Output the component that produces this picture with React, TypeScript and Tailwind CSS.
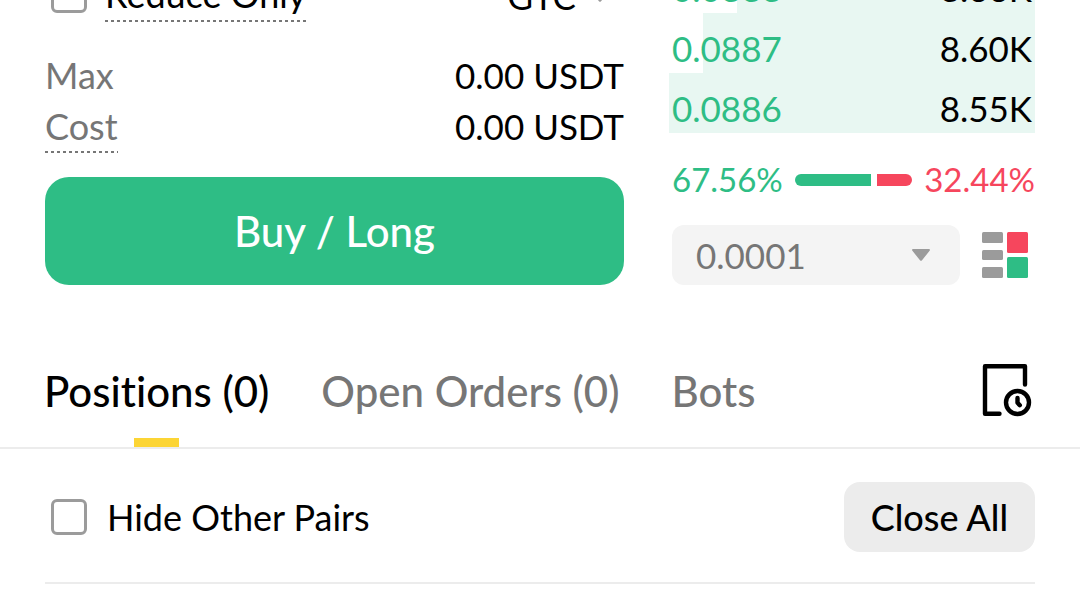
import { useId, useState } from "react";

const DASHED =
  "bg-[linear-gradient(90deg,#767676_50%,transparent_50%)] bg-[length:6px_2px] bg-bottom-left bg-repeat-x";

const bids = [
  { price: "0.0888", amount: "8.66K", depth: 81.4 },
  { price: "0.0887", amount: "8.60K", depth: 90.7 },
  { price: "0.0886", amount: "8.55K", depth: 100 },
];

const tabs = ["Positions (0)", "Open Orders (0)", "Bots"];

function Caret({ className }: { className: string }) {
  return (
    <svg viewBox="0 0 18 12" className={`h-3 w-[18px] ${className}`} aria-hidden="true">
      <path d="M1.2 0h15.6c1 0 1.5 1 .8 1.8L10 11.3c-.6.7-1.4.7-2 0L.4 1.8C-.3 1 .2 0 1.2 0Z" fill="#9b9b9b" />
    </svg>
  );
}

function Checkbox({ id }: { id: string }) {
  return (
    <input
      id={id}
      type="checkbox"
      className="size-9 shrink-0 appearance-none rounded-md border-3 border-[#9b9b9b] bg-white checked:bg-[#9b9b9b]"
    />
  );
}

function LayoutIcon() {
  return (
    <svg viewBox="0 0 46 46" className="size-[46px]" aria-hidden="true">
      <g fill="#9b9b9b">
        <rect x="0" y="0" width="21" height="11" rx="1.5" />
        <rect x="0" y="18" width="21" height="10" rx="1.5" />
        <rect x="0" y="35" width="21" height="11" rx="1.5" />
      </g>
      <rect x="25" y="0" width="21" height="21" rx="1.5" fill="#f6465d" />
      <rect x="25" y="25" width="21" height="21" rx="1.5" fill="#2ebd85" />
    </svg>
  );
}

function HistoryIcon() {
  return (
    <svg
      viewBox="0 0 50 54"
      className="h-[54px] w-[50px]"
      fill="none"
      stroke="#000"
      strokeWidth="4.4"
      strokeLinecap="round"
      strokeLinejoin="round"
      aria-hidden="true"
    >
      <path d="M17.5 50.8H3V3.2H43V21.5" />
      <circle cx="35.5" cy="39.5" r="11.5" />
      <path d="M35.5 35V39.8L37.8 42.2" />
    </svg>
  );
}

function OrderForm() {
  const reduceId = useId();
  return (
    <section className="flex flex-col">
      <div className="mt-[17px] flex h-[52px] justify-between">
        <div className="flex gap-[18px] pl-[6px]">
          <div className="pt-[3px]">
            <Checkbox id={reduceId} />
          </div>
          <label htmlFor={reduceId} className={`text-4xl leading-[48px] ${DASHED}`}>
            Reduce Only
          </label>
        </div>
        <div className="relative h-12">
          <select
            aria-label="Time in force"
            className="h-full appearance-none bg-transparent pr-12 text-right"
          >
            <option>GTC</option>
          </select>
          <Caret className="pointer-events-none absolute top-5 right-[15px]" />
        </div>
      </div>

      <dl className="mt-[29px] flex flex-col">
        <div className="flex h-[51px] justify-between leading-[49px]">
          <dt className="text-4xl leading-[49px] text-[#767676]">Max</dt>
          <dd>0.00 USDT</dd>
        </div>
        <div className="flex h-[51px] justify-between leading-[49px]">
          <dt className={`text-4xl leading-[49px] text-[#767676] ${DASHED}`}>Cost</dt>
          <dd>0.00 USDT</dd>
        </div>
      </dl>

      <button
        type="button"
        className="mt-6 h-[108px] rounded-3xl bg-[#2ebd85] text-[42px] font-medium text-white"
      >
        Buy / Long
      </button>
    </section>
  );
}

function OrderBook() {
  return (
    <section className="flex flex-col">
      <ul>
        {bids.map((bid) => (
          <li key={bid.price} className="relative flex h-[60px] justify-between px-[3px] leading-[70px]">
            <div
              className="absolute inset-y-0 right-0 bg-[#e8f7f2]"
              style={{ width: `${bid.depth}%` }}
            />
            <span className="relative text-[#2ebd85]">{bid.price}</span>
            <span className="relative">{bid.amount}</span>
          </li>
        ))}
      </ul>

      <div className="mt-6 flex h-[46px] items-center gap-3 pl-[3px] text-[33px]">
        <span className="text-[#2ebd85]">67.56%</span>
        <div className="flex h-3 flex-1 gap-[6px]">
          <div className="flex-[68] rounded-l-full bg-[#2ebd85]" />
          <div className="flex-[32] rounded-r-full bg-[#f6465d]" />
        </div>
        <span className="text-[#f6465d]">32.44%</span>
      </div>

      <div className="mt-[22px] flex items-center gap-[22px] pr-[7px] pl-[3px]">
        <div className="relative h-[60px] flex-1">
          <select
            aria-label="Price grouping"
            className="size-full appearance-none rounded-xl bg-[#f4f4f4] px-6 text-[#767676]"
          >
            <option>0.0001</option>
          </select>
          <Caret className="pointer-events-none absolute top-6 right-[30px]" />
        </div>
        <button type="button" aria-label="Order book layout">
          <LayoutIcon />
        </button>
      </div>
    </section>
  );
}

export default function App() {
  const [active, setActive] = useState(0);
  const hideId = useId();

  return (
    <div className="overflow-hidden bg-white font-['Lato',sans-serif] text-[35px] text-black [font-variant-ligatures:none]">
      <main className="-mt-[47px]">
        <div className="grid grid-cols-[579fr_366fr] gap-[45px] px-[45px]">
          <OrderForm />
          <OrderBook />
        </div>

        <div className="mt-[52px] flex justify-between border-b-2 border-[#ececec] pr-12 pl-11">
          <div role="tablist" className="flex gap-[52px]">
            {tabs.map((tab, i) => (
              <button
                key={tab}
                type="button"
                role="tab"
                aria-selected={i === active}
                onClick={() => setActive(i)}
                className={`flex h-[110px] flex-col items-center justify-between text-[42px] leading-[108px] font-medium ${
                  i === active ? "text-black" : "text-[#767676]"
                }`}
              >
                <span className="h-[101px]">{tab}</span>
                {i === active && <span className="h-[9px] w-[45px] bg-[#fcd535]" />}
              </button>
            ))}
          </div>
          <button type="button" aria-label="Order history" className="mt-[26px] self-start">
            <HistoryIcon />
          </button>
        </div>

        <div className="mx-[45px] flex items-center justify-between border-b-2 border-[#ececec] pt-[33px] pb-[30px]">
          <div className="flex items-center gap-5 pl-[6px]">
            <Checkbox id={hideId} />
            <label htmlFor={hideId} className="text-4xl">
              Hide Other Pairs
            </label>
          </div>
          <button
            type="button"
            className="h-[70px] rounded-2xl bg-[#ececec] px-[27px] text-4xl font-medium"
          >
            Close All
          </button>
        </div>
      </main>
    </div>
  );
}
